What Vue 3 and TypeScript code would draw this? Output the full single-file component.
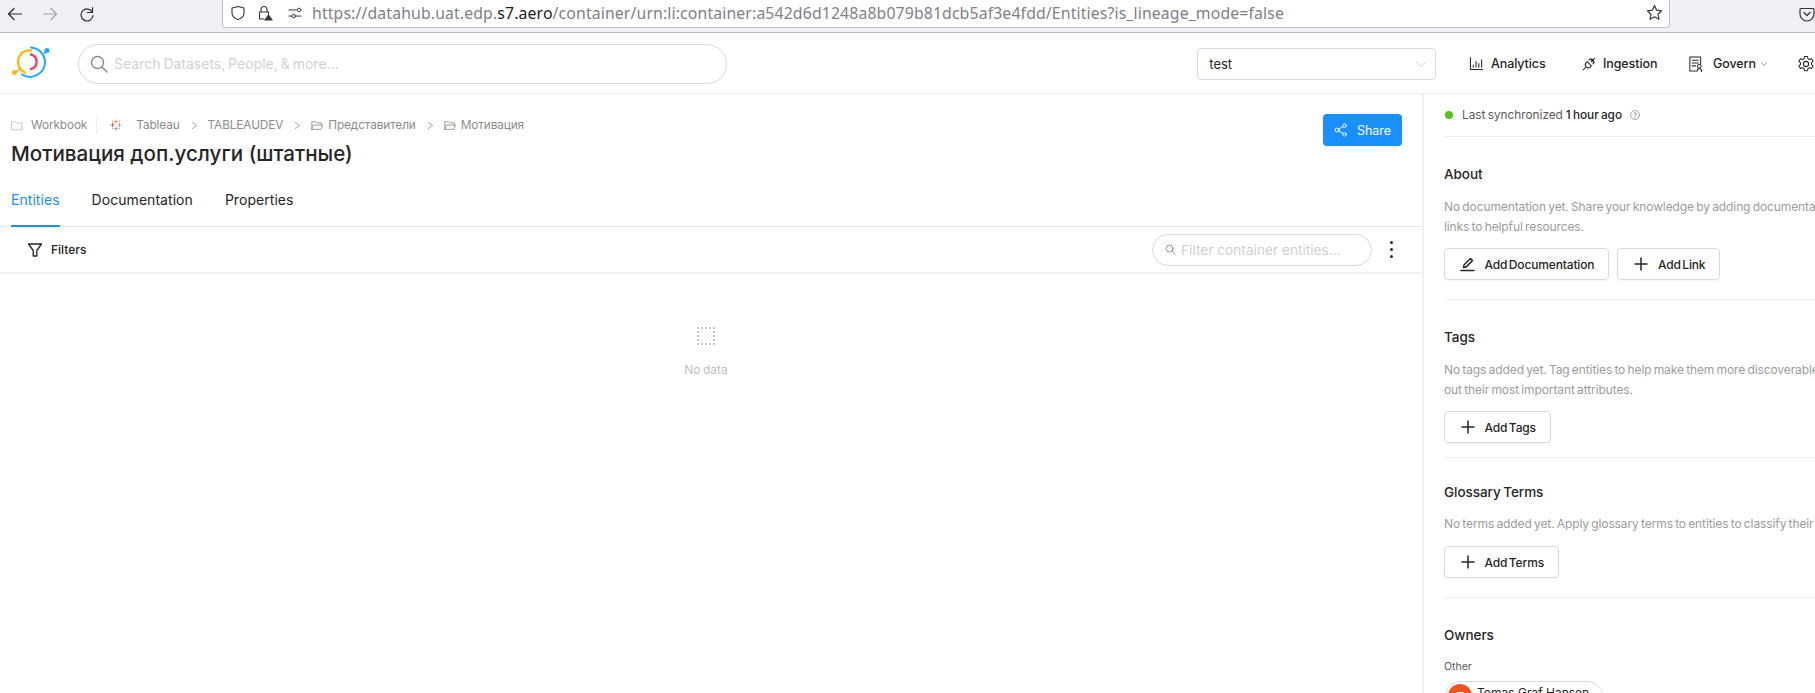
<script setup lang="ts">
interface Crumb { label: string; folder: boolean }
const crumbs: Crumb[] = [
  { label: 'TABLEAUDEV', folder: false },
  { label: 'Представители', folder: true },
  { label: 'Мотивация', folder: true },
]
const tabs: string[] = ['Entities', 'Documentation', 'Properties']
</script>

<template>
  <div class="page">
    <div class="chrome">
      <div class="nav-btns">
        <svg class="nav-ic" viewBox="0 0 16 16"><path d="M14.5 8H1.5M7 2.5 1.5 8 7 13.5" /></svg>
        <svg class="nav-ic dim" viewBox="0 0 16 16"><path d="M1.5 8h13M9 2.500 14.500 8 9 13.500" /></svg>
        <svg class="nav-ic reload" viewBox="0 0 16 16"><path d="M13.500 1.500v5h-5M13.500 6.500A6 6 0 1 0 14 9.500" /></svg>
      </div>
      <div class="urlbar">
        <svg class="url-ic shield" viewBox="0 0 16 16"><path d="M8 1.500 14 3v5c0 3.500-3 5.500-6 6.500C5 13.500 2 11.500 2 8V3z" /></svg>
        <svg class="url-ic lock" viewBox="0 0 16 16"><path d="M4 7V4.500a3 3 0 0 1 6 0V7M2.500 7h9v2M2.500 7v7H7" /><path class="fill" d="M11.500 9 16 15.500H7z" /></svg>
        <svg class="url-ic tune" viewBox="0 0 16 16"><path d="M1 4.500h8.500M1 11.500h3M9.500 11.500H15" /><circle cx="12.500" cy="4.500" r="2" /><circle cx="6.500" cy="11.500" r="2" /></svg>
        <span class="url"><span>https://datahub.uat.edp.</span><b>s7.aero</b><span>/container/urn:li:container:a542d6d1248a8b079b81dcb5af3e4fdd/Entities?is_lineage_mode=false</span></span>
        <svg class="star" viewBox="0 0 16 16"><path d="m8 1.500 2 4.300 4.700.6-3.400 3.200.9 4.700L8 12l-4.200 2.300.9-4.700L1.300 6.400 6 5.800z" /></svg>
      </div>
      <svg class="pocket" viewBox="0 0 16 16"><path d="M2 2.500h12a1 1 0 0 1 1 1V8a7 7 0 0 1-14 0V3.500a1 1 0 0 1 1-1zM5 6.500l3 3 3-3" /></svg>
    </div>

    <header class="topbar">
      <svg class="logo" viewBox="0 0 40 36">
        <path d="M20 1.500A15 15 0 0 1 34 16A15 15 0 0 1 11 28.500" fill="none" stroke="#1ea7fd" stroke-width="2" stroke-linecap="round" />
        <path d="M34 7 35.500 5" stroke="#1ea7fd" stroke-width="2" />
        <circle cx="36" cy="4.500" r="2.500" fill="#1ea7fd" />
        <path d="M20 4.500A11.500 11.500 0 0 0 14 26.500" fill="none" stroke="#fdb813" stroke-width="2.400" stroke-linecap="round" />
        <path d="M10 23 4 26" stroke="#fdb813" stroke-width="1.800" />
        <circle cx="3.500" cy="26.500" r="2.500" fill="#fdb813" />
        <path d="M20 8.500A7.500 7.500 0 0 1 20 23" fill="none" stroke="#ee4266" stroke-width="2.400" stroke-linecap="round" />
      </svg>
      <div class="search">
        <svg class="search-ic" viewBox="0 0 18 18"><circle cx="7.500" cy="7.500" r="6" /><path d="m12 12 5 5" /></svg>
        <span>Search Datasets, People, &amp; more...</span>
      </div>
      <div class="select">
        <span>test</span>
        <svg viewBox="0 0 12 12"><path d="m1.500 4 4.500 4.500L10.500 4" /></svg>
      </div>
      <nav class="menu">
        <span class="menu-item analytics">
          <svg viewBox="0 0 16 16"><path d="M1.500 1.500v13h13M4.500 12V9.500M7.500 12V6M10.500 12V8M13.500 12V4" /></svg>Analytics
        </span>
        <span class="menu-item ingestion">
          <svg viewBox="0 0 16 16"><path d="m5.500 6 4.500 4.500-1 1a3 3 0 0 1-4.500-4.500zM9 3.500a2.800 2.800 0 0 1 3.500 3.500M10 6l3.500-3.500M7.500 4.500 9 3l4 4-1.500 1.500M4 12l-2.500 2.500" /></svg>Ingestion
        </span>
        <span class="menu-item govern">
          <svg class="big" viewBox="0 0 16 18"><path d="M8 16.500H2V1.500h11.500V9M4.500 5h6.500M4.500 8h6.500M4.500 11H8" /><circle cx="12" cy="11.500" r="2" /><path d="M9.500 17c0-2 1-3 2.500-3s2.500 1 2.500 3" /></svg>Govern
          <svg class="caret" viewBox="0 0 12 12"><path d="m3 4.500 3 3 3-3" /></svg>
        </span>
        <svg class="gear" viewBox="0 0 24 24"><path d="M10 2h4l.6 3 2 1 2.800-1.100 2 3.500-2.200 2v2.200l2.200 2-2 3.500-2.800-1.100-2 1-.6 3h-4l-.6-3-2-1-2.800 1.100-2-3.500 2.200-2v-2.200l-2.200-2 2-3.500L7.400 6l2-1z" /><circle cx="12" cy="12" r="3.500" /></svg>
      </nav>
    </header>

    <div class="body">
      <main class="left">
        <div class="head">
          <div class="head-text">
            <div class="crumbs">
              <span class="crumb type">
                <svg class="folder pale" viewBox="0 0 14 12"><path d="M1 1.500h4l1.500 1.500H13v8H1z" /></svg>Workbook
              </span>
              <i class="sep"></i>
              <span class="tableau" aria-hidden="true">
                <svg viewBox="0 0 12 12">
                  <path d="M6 1v3M4.500 2.500h3" stroke="#e8762d" />
                  <path d="M6 8v3M4.500 9.500h3" stroke="#5b879b" />
                  <path d="M1 6h3M2.500 4.500v3" stroke="#c72037" />
                  <path d="M8 6h3M9.500 4.500v3" stroke="#7099a6" />
                  <path d="M2.500 2v1M9.500 2v1M2.500 9v1M9.500 9v1" stroke="#eb912b" />
                </svg>
              </span>
              <span class="crumb platform">Tableau</span>
              <template v-for="c in crumbs" :key="c.label">
                <svg class="gt" viewBox="0 0 8 10"><path d="m1.500 1.500 5 3.500-5 3.500" /></svg>
                <span class="crumb">
                  <svg v-if="c.folder" class="folder" viewBox="0 0 14 12"><path d="M1 10.500v-9h4l1.500 1.500H12v2M1 10.500h10.500L13.500 5.500H3z" /></svg>
                  {{ c.label }}
                </span>
              </template>
            </div>
            <h1 class="title">Мотивация доп.услуги (штатные)</h1>
          </div>
          <button class="share">
            <svg viewBox="0 0 16 16"><circle cx="3.500" cy="8" r="2.300" /><circle cx="12" cy="3" r="2" /><circle cx="12" cy="13" r="2" /><path d="m5.500 7 4.800-3M5.500 9l4.800 3" /></svg>
            Share
          </button>
        </div>

        <div class="tabs">
          <span v-for="(t, i) in tabs" :key="t" class="tab" :class="{ active: i === 0 }">{{ t }}</span>
        </div>

        <div class="toolbar">
          <span class="filters">
            <svg viewBox="0 0 16 16"><path d="M1.500 2h13L9.800 8.500v5.500H6.200V8.500z" /></svg>Filters
          </span>
          <div class="filter-input">
            <svg viewBox="0 0 12 12"><circle cx="5" cy="5" r="3.800" /><path d="m8 8 3 3" /></svg>
            <span>Filter container entities...</span>
          </div>
          <span class="kebab"><i></i><i></i><i></i></span>
        </div>

        <div class="empty">
          <span class="empty-box"></span>
          <span class="empty-label">No data</span>
        </div>
      </main>

      <aside class="side">
        <div class="sync">
          <i class="dot"></i>
          <span class="sync-a">Last synchronized</span>
          <b>1 hour ago</b>
          <svg viewBox="0 0 12 12"><circle cx="6" cy="6" r="4.500" /><path d="M4.700 4.800a1.300 1.300 0 1 1 1.300 1.500v.7M6 8.300v.5" /></svg>
        </div>

        <section class="sec about">
          <h3>About</h3>
          <p>No documentation yet. Share your knowledge by adding documentation and<br />links to helpful resources.</p>
          <div class="btns">
            <button class="btn">
              <svg viewBox="0 0 16 16"><path d="M1 14.500h13M3.500 11.500l.6-2.700L10.500 2.500l2 2-6.300 6.400z" /></svg>
              Add Documentation
            </button>
            <button class="btn">
              <svg viewBox="0 0 16 16"><path d="M8 2v12M2 8h12" /></svg>
              Add Link
            </button>
          </div>
        </section>

        <section class="sec tags">
          <h3>Tags</h3>
          <p>No tags added yet. Tag entities to help make them more discoverable and call<br />out their most important attributes.</p>
          <div class="btns">
            <button class="btn">
              <svg viewBox="0 0 16 16"><path d="M8 2v12M2 8h12" /></svg>
              Add Tags
            </button>
          </div>
        </section>

        <section class="sec terms">
          <h3>Glossary Terms</h3>
          <p>No terms added yet. Apply glossary terms to entities to classify their data.</p>
          <div class="btns">
            <button class="btn">
              <svg viewBox="0 0 16 16"><path d="M8 2v12M2 8h12" /></svg>
              Add Terms
            </button>
          </div>
        </section>

        <section class="sec owners">
          <h3>Owners</h3>
          <div class="other">Other</div>
          <div class="owner-pill">
            <span class="avatar">T</span>
            <span class="owner-name">Tomas Graf Hansen</span>
          </div>
        </section>
      </aside>
    </div>
  </div>
</template>

<style>
html, body { margin: 0; background: #fff; overflow: hidden; }
</style>

<style scoped>
.page { width: 1815px; height: 693px; overflow: hidden; display: flex; flex-direction: column; font-family: Inter, "Noto Sans", sans-serif; color: #262626; background: #fff; }
svg { fill: none; stroke: currentColor; stroke-linecap: round; stroke-linejoin: round; flex: none; }

.chrome { height: 32px; flex: none; display: flex; align-items: flex-start; background: #f0f0f4; border-bottom: 1px solid #b8b8bc; }
.nav-btns { width: 222px; flex: none; display: flex; padding: 6px 0 0 7px; gap: 19px; box-sizing: border-box; }
.nav-ic { width: 16px; height: 16px; color: #2b2b2f; stroke-width: 1.2; }
.nav-ic.dim { color: #a5a5a9; }
.nav-ic.reload { margin-left: 2px; }
.urlbar { width: 1448px; height: 28px; flex: none; box-sizing: border-box; background: #fff; border: 1px solid #c4c4c8; border-top: 0; border-radius: 0 0 4px 4px; display: flex; align-items: center; padding: 0 6px 2px 7px; }
.url-ic { width: 16px; height: 16px; color: #36363a; stroke-width: 1.1; }
.shield { margin-right: 11px; }
.lock { margin-right: 15px; }
.tune { width: 14px; height: 14px; margin-right: 10px; }
.fill { fill: #36363a; stroke: none; }
.url { flex: 1; font-family: "Noto Sans", sans-serif; font-size: 15.8px; color: #808085; white-space: nowrap; overflow: hidden; letter-spacing: .13px; }
.url b { font-weight: 400; color: #1c1b22; }
.star { width: 17px; height: 17px; color: #36363a; stroke-width: 1.1; }
.pocket { width: 16px; height: 16px; margin: 6px 0 0 129px; color: #36363a; stroke-width: 1.2; }

.topbar { height: 61px; flex: none; box-sizing: border-box; display: flex; align-items: center; border-bottom: 1px solid #f0f0f0; padding-top: 1px; }
.logo { width: 40px; height: 36px; margin-left: 11px; flex: none; stroke: none; }
.search { width: 653px; height: 40px; box-sizing: border-box; margin-left: 27px; border: 1px solid #d9d9d9; border-radius: 20px; display: flex; align-items: center; padding: 0 0 0 11px; color: #d2d2d2; font-size: 14px; word-spacing: -1px; }
.search-ic { width: 18px; height: 18px; margin-right: 6px; color: #8c8c8c; stroke-width: 1.5; }
.select { width: 240px; height: 32px; box-sizing: border-box; margin-left: 470px; border: 1px solid #d9d9d9; border-radius: 4px; display: flex; align-items: center; justify-content: space-between; padding: 0 8px 0 11px; font-size: 13px; }
.select svg { width: 12px; height: 12px; color: #bfbfbf; stroke-width: .9; }
.menu { display: flex; align-items: center; font-size: 12.5px; margin-left: 33px; white-space: nowrap; }
.menu-item { display: flex; align-items: center; gap: 7px; font-weight: 500; color: #262626; letter-spacing: -.1px; }
.menu-item svg { width: 15px; height: 15px; stroke-width: 1.1; }
.menu-item svg.big { width: 15px; height: 18px; }
.menu-item svg.caret { width: 10px; height: 10px; color: #8c8c8c; margin-left: -7px; }
.analytics { width: 112px; }
.ingestion { width: 107px; gap: 6px; }
.ingestion svg { margin-left: 1px; }
.govern { width: 109px; gap: 10px; }
.gear { width: 18px; height: 18px; stroke-width: 1.4; color: #262626; }

.body { flex: 1; display: flex; min-height: 0; }
.left { width: 1422px; flex: none; display: flex; flex-direction: column; }

.head { height: 87px; flex: none; box-sizing: border-box; display: flex; justify-content: space-between; padding: 20px 20px 0 11px; }
.crumbs { display: flex; align-items: center; font-size: 11.8px; letter-spacing: -.1px; height: 22px; color: #8c8c8c; white-space: nowrap; }
.crumb { display: inline-flex; align-items: center; gap: 4px; }
.crumb.type { gap: 7px; }
.folder { width: 12px; height: 11px; stroke-width: 1; color: #8c8c8c; margin-right: 1px; }
.folder.pale { color: #bfbfbf; }
.sep { width: 1px; height: 18px; background: #f0f0f0; margin: 0 13px 0 9px; }
.tableau { width: 12px; height: 12px; display: inline-flex; margin-right: 14px; opacity: .75; }
.tableau svg { width: 12px; height: 12px; stroke-width: 1; }
.gt { width: 7px; height: 9px; color: #8c8c8c; margin: 0 10px 0 11px; stroke-width: .9; }
.title { margin: 3px 0 0; font-size: 20.6px; line-height: 30px; font-weight: 500; color: #262626; }
.share { width: 79px; height: 32px; flex: none; box-sizing: border-box; border: 0; border-radius: 4px; background: #1890ff; color: #fff; font: 400 12.5px Inter, sans-serif; display: flex; align-items: center; justify-content: center; gap: 9px; box-shadow: 0 2px 0 rgba(0, 0, 0, .04); padding: 0; }
.share svg { width: 14px; height: 14px; stroke-width: 1.1; }

.tabs { height: 46px; flex: none; box-sizing: border-box; display: flex; gap: 32px; padding: 0 0 0 11px; border-bottom: 1px solid #e8e8e8; }
.tab { height: 46px; box-sizing: border-box; padding-top: 9px; font-size: 14px; line-height: 20px; letter-spacing: .05px; color: #262626; border-bottom: 2px solid transparent; }
.tab.active { color: #1890ff; border-bottom-color: #1890ff; }

.toolbar { height: 46px; flex: none; box-sizing: border-box; display: flex; align-items: center; padding: 0 11px 0 27px; border-bottom: 1px solid #ececec; box-shadow: 0 2px 3px rgba(0, 0, 0, .03); }
.filters { display: flex; align-items: center; gap: 8px; font-size: 12px; font-weight: 500; flex: 1; }
.filters svg { width: 16px; height: 16px; stroke-width: 1.3; }
.filter-input { width: 220px; height: 32px; box-sizing: border-box; border: 1px solid #d9d9d9; border-radius: 16px; display: flex; align-items: center; padding-left: 12px; gap: 5px; color: #d0d0d0; font-size: 13.7px; white-space: nowrap; overflow: hidden; }
.filter-input svg { width: 11px; height: 11px; color: #8c8c8c; stroke-width: 1; }
.kebab { width: 39px; display: flex; flex-direction: column; align-items: center; gap: 4px; }
.kebab i { width: 3px; height: 3px; border-radius: 50%; background: #262626; }

.empty { display: flex; flex-direction: column; align-items: center; padding-top: 54px; margin-left: -10px; }
.empty-box { width: 14px; height: 14px; border: 2px dotted #c8c8c8; }
.empty-label { margin-top: 17px; font-size: 12px; line-height: 15px; color: #bfbfbf; word-spacing: -1px; }

.side { flex: 1; min-width: 0; box-sizing: border-box; border-left: 2px solid #f0f0f0; padding-left: 20px; overflow: hidden; white-space: nowrap; }
.sync { height: 43px; box-sizing: border-box; display: flex; align-items: center; gap: 7px; font-size: 11.8px; color: #595959; border-bottom: 1px solid #f0f0f0; width: 600px; word-spacing: -1px; }
.dot { width: 8px; height: 8px; border-radius: 50%; background: #52c41a; margin: 0 2px 0 1px; }
.sync b { font-weight: 500; color: #262626; margin-left: -4px; }
.sync svg { width: 12px; height: 12px; color: #8c8c8c; stroke-width: .8; }
.sec { border-bottom: 1px solid #f0f0f0; box-sizing: border-box; width: 600px; padding-top: 26px; }
.sec h3 { margin: 0; font-size: 13.5px; line-height: 22px; font-weight: 500; color: #262626; word-spacing: -1px; letter-spacing: -.05px; }
.sec p { margin: 12px 0 0; font-size: 12px; line-height: 20px; color: #9c9c9c; word-spacing: -1px; letter-spacing: -.1px; }
.about { height: 163px; }
.tags { height: 158px; }
.terms { height: 140px; padding-top: 23px; }
.terms p { margin-top: 11px; }
.terms .btns { margin-top: 12px; }
.owners { border-bottom: 0; }
.btns { display: flex; gap: 8px; margin-top: 11px; }
.btn { height: 32px; box-sizing: border-box; border: 1px solid #d9d9d9; border-radius: 4px; background: #fff; box-shadow: 0 2px 0 rgba(0, 0, 0, .02); display: flex; align-items: center; padding: 0 14px 0 15px; gap: 8.5px; font: 500 12px Inter, sans-serif; letter-spacing: -.15px; color: #262626; word-spacing: -1.5px; }
.btn svg { width: 16px; height: 16px; stroke-width: 1.5; }
.other { margin-top: 12px; font-size: 10.5px; line-height: 18px; color: #595959; }
.owner-pill { margin-top: 5px; width: 160px; height: 34px; box-sizing: border-box; border: 1px solid #d9d9d9; border-radius: 17px; display: flex; align-items: flex-start; padding: 2px 0 0 3px; gap: 5px; font-size: 12px; }
.avatar { width: 24px; height: 24px; border-radius: 50%; background: #f4511e; color: #fff; font-size: 12px; display: flex; align-items: center; justify-content: center; }
.owner-name { color: #262626; white-space: nowrap; overflow: hidden; margin-top: 1px; line-height: 16px; }
</style>
